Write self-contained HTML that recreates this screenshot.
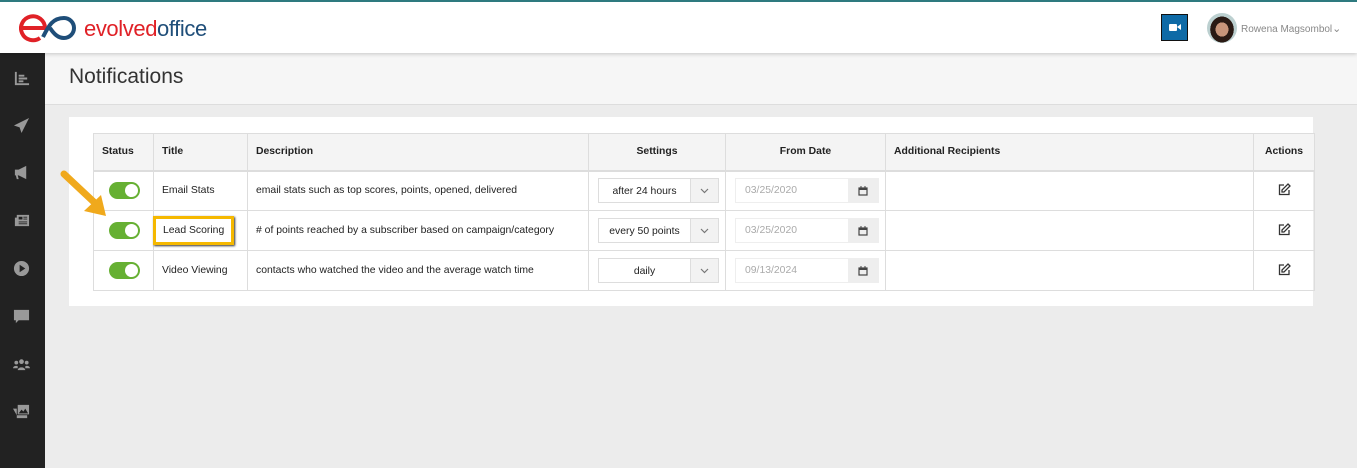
<!DOCTYPE html>
<html><head><style>
*{box-sizing:border-box;margin:0;padding:0}
body{width:1357px;height:468px;overflow:hidden;background:#ececec;font-family:"Liberation Sans",Arial,sans-serif;position:relative}
.top{position:absolute;left:0;top:0;width:1357px;height:53px;background:#fff;border-top:2px solid #2e7a7f;box-shadow:0 1px 4px rgba(0,0,0,.2);z-index:3}
.side{position:absolute;left:0;top:53px;width:45px;height:415px;background:#222}
.side svg{position:absolute;left:13px;width:17px;height:17px;fill:#999}
.band{position:absolute;left:45px;top:53px;width:1312px;height:52px;background:#f6f6f6;border-bottom:1px solid #ddd}
.band h1{position:absolute;left:24px;top:12px;font-weight:normal;font-size:21px;color:#333}
.card{position:absolute;left:69px;top:117px;width:1244px;height:189px;background:#fff}
table{position:absolute;left:93px;top:133px;width:1221px;table-layout:fixed;border-collapse:collapse;font-size:10.4px;color:#222}
td,th{border:1px solid #ddd;padding:0 8px;text-align:left;white-space:nowrap}
th{background:#f4f4f4;height:37px;font-weight:bold;border-bottom:2px solid #ddd}
td{height:40px}
.c{text-align:center}
.tog{width:31px;height:17px;border-radius:9px;background:#66b033;position:relative;margin-left:7px}
.tog:after{content:"";position:absolute;right:2px;top:2px;width:13px;height:13px;border-radius:50%;background:#fff}
.sel{display:flex;width:121px;height:25px;border:1px solid #ddd;margin-left:1px}
.sel span{flex:1;text-align:center;line-height:25px}
.sel b{width:28px;background:#f2f2f2;border-left:1px solid #ddd;display:flex;align-items:center;justify-content:center}
.dt{display:flex;width:144px;height:25px;border:1px solid #eee;margin-left:1px}
.dt span{flex:1;line-height:23px;color:#aaa;padding-left:9px}
.dt b{width:30px;background:#eee;display:flex;align-items:center;justify-content:center}
</style></head><body>
<div class="top">
 <svg style="position:absolute;left:19px;top:11px" width="60" height="30" viewBox="0 0 60 30"><path d="M4 15 H26 A12 12 0 1 0 21 25" fill="none" stroke="#e02127" stroke-width="4"/><path d="M24 24 C30 12 34 5 45 5 A10 10 0 1 1 45 25 C39 25 35 21 31 15" fill="none" stroke="#1f4e79" stroke-width="4"/></svg>
 <div style="position:absolute;left:84px;top:14px;font-size:22px;letter-spacing:-0.4px"><span style="color:#e02127">evolved</span><span style="color:#1f4e79">office</span></div>
 <div style="position:absolute;left:1161px;top:12px;width:27px;height:27px;background:#0e6aa6;border:1px solid #111"><div style="position:absolute;left:7px;top:9px;width:8px;height:7px;background:#fff;border-radius:1px"></div><div style="position:absolute;left:15px;top:9px;border:3.5px solid transparent;border-right:4px solid #fff;border-left:0"></div></div>
 <div style="position:absolute;left:1207px;top:11px;width:30px;height:30px;border-radius:50%;background:radial-gradient(ellipse at 50% 55%,#c8957a 0 30%,#2a1a14 31% 55%,#bcd0d0 56%)"></div>
 <div style="position:absolute;left:1241px;top:20px;font-size:10px;color:#888">Rowena Magsombol<span style="font-size:11px">⌄</span></div>
</div>
<div class="side">
 <svg style="top:17px" viewBox="0 0 18 18"><path d="M2 2h2v12h13v2H2z M6 5h6v2H6z M6 8h9v2H6z M6 11h5v2H6z"/></svg>
 <svg style="top:64px" viewBox="0 0 18 18"><path d="M17 1 L1 9 L7 11 L9 17 Z"/></svg>
 <svg style="top:111px" viewBox="0 0 18 18"><path d="M2 6h4l8-4v14l-8-4H5l1 4H4l-1-4H2z"/></svg>
 <svg style="top:159px" viewBox="0 0 18 18"><path d="M4 3h13v12H2V6h2z M6 5v3h4V5z M11 5v1h4V5z M11 7v1h4V7z M6 10v1h9v-1z M6 12v1h9v-1z" fill-rule="evenodd"/></svg>
 <svg style="top:207px" viewBox="0 0 18 18"><circle cx="9" cy="9" r="8"/><path d="M7 5l6 4-6 4z" fill="#222"/></svg>
 <svg style="top:255px" viewBox="0 0 18 18"><path d="M1 2h16v11H6l-3 3v-3H1z"/></svg>
 <svg style="top:303px" viewBox="0 0 18 18"><circle cx="9" cy="6" r="2.5"/><circle cx="3.5" cy="7" r="2"/><circle cx="14.5" cy="7" r="2"/><path d="M5 15c0-4 8-4 8 0z M0 13c0-3 5-3 5-2v2z M18 13c0-3-5-3-5-2v2z"/></svg>
 <svg style="top:350px" viewBox="0 0 18 18"><path d="M5 2h12v10H5z M0 6h4v10h11v-3H4" /><path d="M6 11l3-4 2 2 2-3 3 5z" fill="#222"/></svg>
</div>
<div class="band"><h1>Notifications</h1></div>
<div class="card"></div>
<table>
<colgroup><col style="width:60px"><col style="width:94px"><col style="width:341px"><col style="width:137px"><col style="width:160px"><col style="width:368px"><col style="width:61px"></colgroup>
<tr><th>Status</th><th>Title</th><th>Description</th><th class="c">Settings</th><th class="c">From Date</th><th>Additional Recipients</th><th class="c">Actions</th></tr>
<tr><td><div class="tog"></div></td><td>Email Stats</td><td>email stats such as top scores, points, opened, delivered</td><td><div class="sel"><span>after 24 hours</span><b><svg width="9" height="6" viewBox="0 0 9 6"><path d="M1 1l3.5 3.5L8 1" fill="none" stroke="#777" stroke-width="1.2"/></svg></b></div></td><td><div class="dt"><span>03/25/2020</span><b><svg width="10" height="10" viewBox="0 0 10 10"><rect x="1" y="2" width="8" height="7" fill="none" stroke="#444" stroke-width="1.2"/><rect x="1" y="2" width="8" height="2" fill="#444"/><path d="M3 0v2M7 0v2" stroke="#444"/></svg></b></div></td><td></td><td class="c"><svg width="13" height="13" viewBox="0 0 13 13"><path d="M6 2H1.5v9.5H11V7" fill="none" stroke="#333" stroke-width="1.3"/><path d="M10 1l2 2-6 6H4V7z" fill="none" stroke="#333" stroke-width="1.3"/></svg></td></tr>
<tr><td><div class="tog"></div></td><td><span style="display:inline-block;border:3px solid #f5b800;padding:6px 7px;margin-left:-9px;box-shadow:1px 1px 2px #333">Lead Scoring</span></td><td># of points reached by a subscriber based on campaign/category</td><td><div class="sel"><span>every 50 points</span><b><svg width="9" height="6" viewBox="0 0 9 6"><path d="M1 1l3.5 3.5L8 1" fill="none" stroke="#777" stroke-width="1.2"/></svg></b></div></td><td><div class="dt"><span>03/25/2020</span><b><svg width="10" height="10" viewBox="0 0 10 10"><rect x="1" y="2" width="8" height="7" fill="none" stroke="#444" stroke-width="1.2"/><rect x="1" y="2" width="8" height="2" fill="#444"/><path d="M3 0v2M7 0v2" stroke="#444"/></svg></b></div></td><td></td><td class="c"><svg width="13" height="13" viewBox="0 0 13 13"><path d="M6 2H1.5v9.5H11V7" fill="none" stroke="#333" stroke-width="1.3"/><path d="M10 1l2 2-6 6H4V7z" fill="none" stroke="#333" stroke-width="1.3"/></svg></td></tr>
<tr><td><div class="tog"></div></td><td>Video Viewing</td><td>contacts who watched the video and the average watch time</td><td><div class="sel"><span>daily</span><b><svg width="9" height="6" viewBox="0 0 9 6"><path d="M1 1l3.5 3.5L8 1" fill="none" stroke="#777" stroke-width="1.2"/></svg></b></div></td><td><div class="dt"><span>09/13/2024</span><b><svg width="10" height="10" viewBox="0 0 10 10"><rect x="1" y="2" width="8" height="7" fill="none" stroke="#444" stroke-width="1.2"/><rect x="1" y="2" width="8" height="2" fill="#444"/><path d="M3 0v2M7 0v2" stroke="#444"/></svg></b></div></td><td></td><td class="c"><svg width="13" height="13" viewBox="0 0 13 13"><path d="M6 2H1.5v9.5H11V7" fill="none" stroke="#333" stroke-width="1.3"/><path d="M10 1l2 2-6 6H4V7z" fill="none" stroke="#333" stroke-width="1.3"/></svg></td></tr>
</table>
<svg style="position:absolute;left:56px;top:168px" width="56" height="54" viewBox="0 0 56 54"><path d="M8 6 L40 36" stroke="#f0a91c" stroke-width="7" stroke-linecap="round"/><path d="M50 48 L28 43 L45 27 Z" fill="#f0a91c"/></svg>
</body></html>
